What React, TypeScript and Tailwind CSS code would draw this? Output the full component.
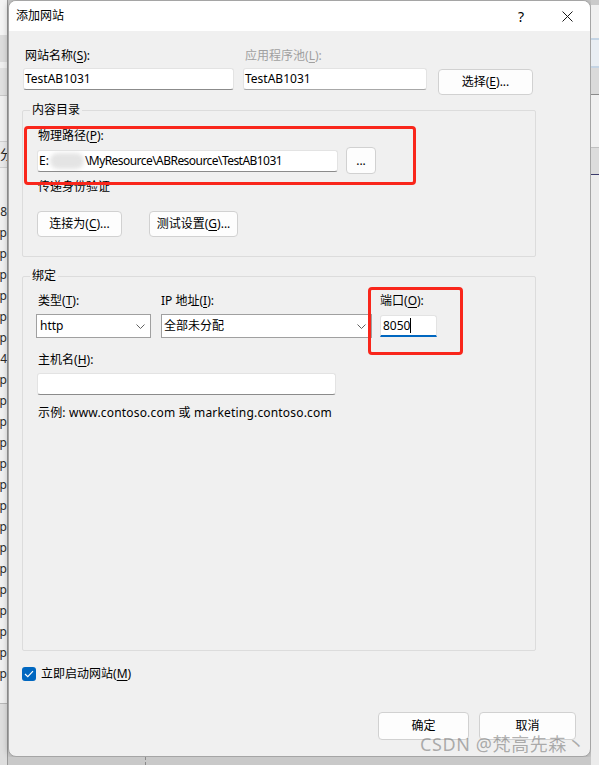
import type { ReactNode } from 'react'

const leftRows = ['1.8', 'tcp', 'tcp', 'tcp', 'tcp', 'tcp', 'tcp', '1.4', 'tcp', 'tcp', 'tcp', 'tcp', 'tcp', 'tcp', 'tcp', 'tcp', 'tcp', 'tcp', 'tcp', 'tcp', 'tcp', 'tcp', 'tcp']

// access-key label, e.g. 网站名称(S):
const Key = ({ pre, k, post = '):' }: { pre: string; k: string; post?: string }) => (
  <>
    {pre}(<u className="underline underline-offset-[2px] decoration-[1px]">{k}</u>{post}
  </>
)

const Btn = ({ children, className = '' }: { children: ReactNode; className?: string }) => (
  <div className={`h-[26px] rounded-[4px] border border-[#d1d1d1] bg-[#fdfdfd] flex items-center justify-center text-[12px] leading-[16px] ${className}`}>
    {children}
  </div>
)

const Chevron = () => (
  <svg width="9" height="5" viewBox="0 0 9 5" className="shrink-0">
    <path d="M0.5 0.5 L4.5 4.5 L8.5 0.5" fill="none" stroke="#606060" strokeWidth="1" />
  </svg>
)

const Input = ({ children, className = '' }: { children?: ReactNode; className?: string }) => (
  <div className={`h-[22px] rounded-[3px] border border-[#e3e3e3] border-b-[#8b8b8b] bg-white flex items-center pl-[1px] text-[12px] leading-[16px] whitespace-nowrap overflow-hidden ${className}`}>
    {children}
  </div>
)

const LeftStrip = () => (
  <div className="w-[8px] h-full flex flex-col shrink-0 bg-[#f0f0f0] overflow-hidden border-r border-[#9a9a9a]">
    <div className="h-[35px] bg-[#f4f4f4]" />
    <div className="h-[27px] bg-[#dcdcdc]" />
    <div className="h-[6px] bg-[#efefef]" />
    <div className="h-[28px] bg-[#e0e0e0] border-b border-[#c8c8c8]" />
    <div className="h-[45px]" />
    <div className="h-[27px] bg-[#e9e9e9] border-y border-[#d0d0d0] text-[13px] leading-[25px] text-[#222] whitespace-nowrap">分类</div>
    <div className="h-[33px]" />
    {leftRows.map((t, i) => (
      <div key={i} className="h-[21px] flex justify-end overflow-hidden text-[12px] leading-[21px] text-[#2a2a2a] whitespace-nowrap">
        {t}
      </div>
    ))}
    <div className="h-[19px]" />
    <div className="flex-1 bg-[#dedede] border-t border-[#b8b8b8]" />
  </div>
)

const RightStrip = () => (
  <div className="w-[8px] h-full flex flex-col shrink-0 bg-[#ececec]">
    <div className="h-[5px] bg-[#cacaca]" />
    <div className="h-[33px] bg-[#f0f0f0]" />
    <div className="h-[2px] bg-[#c4d4e4]" />
    <div className="h-[26px] bg-[#e9eef3]" />
    <div className="h-[2px] bg-[#c4d4e4]" />
    <div className="h-[27px] bg-[#dadada] border-b border-[#8a8a8a]" />
    <div className="h-[53px] bg-[#f0f0f0] border-b border-[#c0c0c0]" />
    <div className="h-[27px] bg-[#dcdcdc] border-b border-[#3b3b6b]" />
    <div className="flex-1 bg-[#ececec]" />
  </div>
)

export default function App() {
  return (
    <div className="relative w-[599px] h-[765px] flex bg-[#cdcdcd] overflow-hidden text-black font-['Noto_Sans','Noto_Sans_CJK_SC',sans-serif]">
      <LeftStrip />

      <div className="w-[583px] h-full flex flex-col shrink-0">
        <div className="h-[757px] rounded-lg border border-[#a5a5a5] bg-[#f0f0f0] overflow-hidden flex flex-col shadow-[0_0_6px_rgba(0,0,0,0.25)]">
          {/* title bar */}
          <div className="h-[30px] bg-white flex items-center shrink-0">
            <span className="pl-[7px] text-[12px] leading-[16px] flex-1">添加网站</span>
            <div className="w-[46px] h-full flex items-center justify-center text-[14px]">?</div>
            <div className="w-[46px] h-full flex items-center justify-center">
              <svg width="11" height="11" viewBox="0 0 11 11">
                <path d="M0.5 0.5 L10.5 10.5 M10.5 0.5 L0.5 10.5" stroke="#1a1a1a" strokeWidth="1" />
              </svg>
            </div>
          </div>

          {/* body */}
          <div className="flex-1 flex flex-col px-[14px] pt-[17px] text-[12px] leading-[16px]">
            <div className="flex items-start">
              <div className="w-[211px] flex flex-col">
                <span className="pl-[2px]"><Key pre="网站名称" k="S" /></span>
                <Input className="mt-[4px]">TestAB1031</Input>
              </div>
              <div className="w-[184px] ml-[9px] flex flex-col">
                <span className="pl-[2px] text-[#a0a0a0]"><Key pre="应用程序池" k="L" /></span>
                <Input className="mt-[4px] bg-[#f7f7f7] border-[#d9d9d9] border-b-[#a8a8a8]">TestAB1031</Input>
              </div>
              <Btn className="ml-[11px] mt-[21px] w-[95px]"><Key pre="选择" k="E" post=")..." /></Btn>
            </div>

            {/* 内容目录 */}
            <fieldset className="-ml-[1px] mt-[7px] w-[514px] border border-[#dcdcdc] rounded-[2px]">
              <legend className="ml-[7px] px-[2px] text-[12px] leading-[16px]">内容目录</legend>
              <div className="flex flex-col pl-[14px] pt-[10px] pb-[19px]">
                <span className="pl-[1px]"><Key pre="物理路径" k="P" /></span>
                <div className="mt-[3px] h-[27px] flex items-center">
                  <Input className="w-[301px]">
                    E:
                    <span className="inline-block w-[34px] h-[16px] mx-[1px] rounded-full bg-[#e4e4e4] blur-[2px]" />
                    <span className="tracking-[-0.55px]">\MyResource\ABResource\TestAB1031</span>
                  </Input>
                  <Btn className="ml-[8px] w-[30px] h-[27px]">...</Btn>
                </div>
                <span className="mt-[5px] pl-[1px]">传递身份验证</span>
                <div className="mt-[16px] flex">
                  <Btn className="w-[85px]"><Key pre="连接为" k="C" post=")..." /></Btn>
                  <Btn className="ml-[27px] w-[89px]"><Key pre="测试设置" k="G" post=")..." /></Btn>
                </div>
              </div>
            </fieldset>

            {/* 绑定 */}
            <fieldset className="-ml-[1px] mt-[11px] w-[514px] h-[383px] border border-[#dcdcdc] rounded-[2px]">
              <legend className="ml-[7px] px-[2px] text-[12px] leading-[16px]">绑定</legend>
              <div className="flex flex-col pl-[14px] pt-[9px]">
                <div className="flex items-start">
                  <div className="-ml-[1px] w-[115px] flex flex-col">
                    <span className="pl-[2px]"><Key pre="类型" k="T" /></span>
                    <div className="mt-[5px] h-[24px] border border-[#a0a0a0] bg-white flex items-center pl-[3px] pr-[5px]">
                      <span className="flex-1">http</span>
                      <Chevron />
                    </div>
                  </div>
                  <div className="ml-[10px] w-[211px] flex flex-col">
                    <span><Key pre="IP 地址" k="I" /></span>
                    <div className="mt-[5px] h-[24px] border border-[#a0a0a0] bg-white flex items-center pl-[2px] pr-[5px]">
                      <span className="flex-1">全部未分配</span>
                      <Chevron />
                    </div>
                  </div>
                  <div className="ml-[8px] w-[57px] flex flex-col">
                    <span><Key pre="端口" k="O" /></span>
                    <div className="mt-[6px] h-[22px] border border-[#e3e3e3] border-b-2 border-b-[#0067c0] rounded-t-[3px] bg-white flex items-center pl-[2px]">
                      8050
                      <span className="inline-block w-[1px] h-[15px] bg-black" />
                    </div>
                  </div>
                </div>
                <span className="mt-[14px] pl-[1px]"><Key pre="主机名" k="H" /></span>
                <Input className="mt-[5px] w-[299px]" />
                <span className="mt-[10px] pl-[1px] tracking-[0.18px]">示例: www.contoso.com 或 marketing.contoso.com</span>
              </div>
            </fieldset>

            <div className="mt-[16px] -ml-[1px] h-[14px] flex items-center">
              <div className="w-[14px] h-[14px] rounded-[3px] bg-[#0067c0] flex items-center justify-center">
                <svg width="10" height="8" viewBox="0 0 10 8">
                  <path d="M1 4 L3.8 6.7 L9 1.2" fill="none" stroke="white" strokeWidth="1.2" />
                </svg>
              </div>
              <span className="ml-[5px]"><Key pre="立即启动网站" k="M" post=")" /></span>
            </div>

            <div className="mt-[31px] flex justify-end gap-[10px]">
              <Btn className="w-[91px] h-[28px] border-[#0067c0] bg-[#fdfdfd]">确定</Btn>
              <Btn className="w-[97px] h-[28px]">取消</Btn>
            </div>
          </div>
        </div>
        <div className="h-[8px] flex bg-[#c9c9c9]">
          <div className="ml-[137px] h-full border-l border-dashed border-[#8a8a8a]" />
        </div>
      </div>

      <RightStrip />

      {/* red annotation boxes */}
      <div className="absolute left-[24px] top-[126px] w-[392px] h-[59px] border-[3px] border-[#f9261b] rounded-[4px]" />
      <div className="absolute left-[368px] top-[287px] w-[95px] h-[68px] border-[3px] border-[#f9261b] rounded-[4px]" />

      {/* watermark */}
      <div className="absolute left-[420px] top-[732px] text-[18px] leading-[24px] tracking-[0.6px] text-[rgba(110,110,110,0.55)] whitespace-nowrap">
        CSDN @梵高先森丶
      </div>
    </div>
  )
}
